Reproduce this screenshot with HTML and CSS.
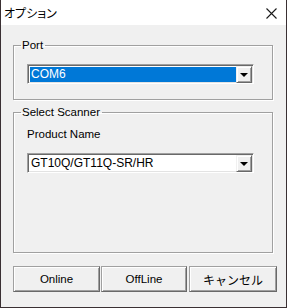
FILE: index.html
```html
<!DOCTYPE html>
<html lang="ja">
<head>
<meta charset="utf-8">
<title>オプション</title>
<link rel="stylesheet" href="styles.css">
</head>
<body>
<div class="window">
  <div class="titlebar">
    <span class="title">オプション</span>
    <svg class="close" width="11" height="11" viewBox="0 0 11 11"><path d="M0.5 0.5L10.5 10.5M10.5 0.5L0.5 10.5" stroke="#1a1a1a" stroke-width="1.1" fill="none"/></svg>
  </div>
  <div class="content">
    <fieldset class="group group-port">
      <legend>Port</legend>
      <div class="combo">
        <div class="combo-text selected">COM6</div>
        <div class="combo-btn"><span class="arrow"></span></div>
      </div>
    </fieldset>
    <fieldset class="group group-scanner">
      <legend>Select Scanner</legend>
      <div class="field-label">Product Name</div>
      <div class="combo">
        <div class="combo-text">GT10Q/GT11Q-SR/HR</div>
        <div class="combo-btn"><span class="arrow"></span></div>
      </div>
    </fieldset>
    <div class="buttons">
      <button class="btn btn-online">Online</button>
      <button class="btn btn-offline">OffLine</button>
      <button class="btn btn-cancel">キャンセル</button>
    </div>
  </div>
</div>
</body>
</html>
```
FILE: styles.css
```css
* { box-sizing: border-box; }
html, body { margin: 0; padding: 0; }
body {
  font-family: "Liberation Sans", "Noto Sans CJK JP", sans-serif;
  font-size: 11.5px;
  color: #000;
  background: #f0f0f0;
}
.window {
  width: 287px;
  height: 308px;
  border: 1px solid #3a3033;
  border-top: none;
  background: #f0f0f0;
  display: flex;
  flex-direction: column;
}
.titlebar {
  height: 25px;
  background: #fff;
  display: flex;
  align-items: center;
  justify-content: space-between;
  padding: 0 9px 0 3px;
}
.title {
  font-family: "Noto Sans CJK JP", sans-serif;
  font-feature-settings: "palt";
  font-size: 12px;
  line-height: 14px;
  margin-top: 1px;
}
.close { display: block; margin-top: 2px; }
.content {
  padding: 13px 0 0 12px;
  display: flex;
  flex-direction: column;
}
.group {
  margin: 0;
  padding: 0;
  width: 260px;
  border: 1px solid #a0a0a0;
  box-shadow: 1px 1px 0 #fff, inset 1px 1px 0 #fff;
  min-width: 0;
}
.group legend {
  margin-left: 7px;
  padding: 0 2px 0 1px;
  line-height: 14px;
}
.group-port {
  height: 62px;
}
.group-port .combo { margin-top: 12px; }
.group-scanner {
  margin-top: 5px;
  height: 148px;
}
.field-label {
  margin: 8px 0 0 13px;
  line-height: 14px;
}
.group-scanner .combo { margin-top: 12px; }
.combo {
  margin-left: 13px;
  width: 227px;
  height: 20px;
  border: 1px solid;
  border-color: #a0a0a0 #fff #fff #a0a0a0;
  box-shadow: inset 1px 1px 0 #696969, inset -1px -1px 0 #e3e3e3;
  background: #fff;
  display: flex;
  padding: 2px 1px 1px 2px;
}
.combo-text {
  flex: 1;
  line-height: 15px;
  padding-left: 1px;
  white-space: nowrap;
  font-size: 12px;
}
.combo-text.selected {
  background: #0078d7;
  color: #fff;
}
.combo-btn {
  width: 16px;
  margin-top: -1px;
  height: 17px;
  background: #f0f0f0;
  border: 1px solid;
  border-color: #f0f0f0 #696969 #696969 #f0f0f0;
  box-shadow: inset 1px 1px 0 #fff, inset -1px -1px 0 #a0a0a0;
  display: flex;
  align-items: center;
  justify-content: center;
}
.arrow {
  width: 0;
  height: 0;
  border-left: 4px solid transparent;
  border-right: 4px solid transparent;
  border-top: 4px solid #000;
}
.buttons {
  margin-top: 13px;
  display: flex;
  gap: 1px;
}
.btn {
  font-family: "Liberation Sans", "Noto Sans CJK JP", sans-serif;
  font-size: 11.5px;
  height: 26px;
  padding: 0;
  margin: 0;
  background: #f0f0f0;
  color: #000;
  border: 1px solid;
  border-color: #a0a0a0 #696969 #696969 #a0a0a0;
  box-shadow: inset 1px 1px 0 #fff, inset -1px -1px 0 #a0a0a0;
}
.btn-online { width: 87px; }
.btn-offline { width: 86px; }
.btn-cancel { width: 88px; margin-left: 1px; font-size: 12px; }
```
